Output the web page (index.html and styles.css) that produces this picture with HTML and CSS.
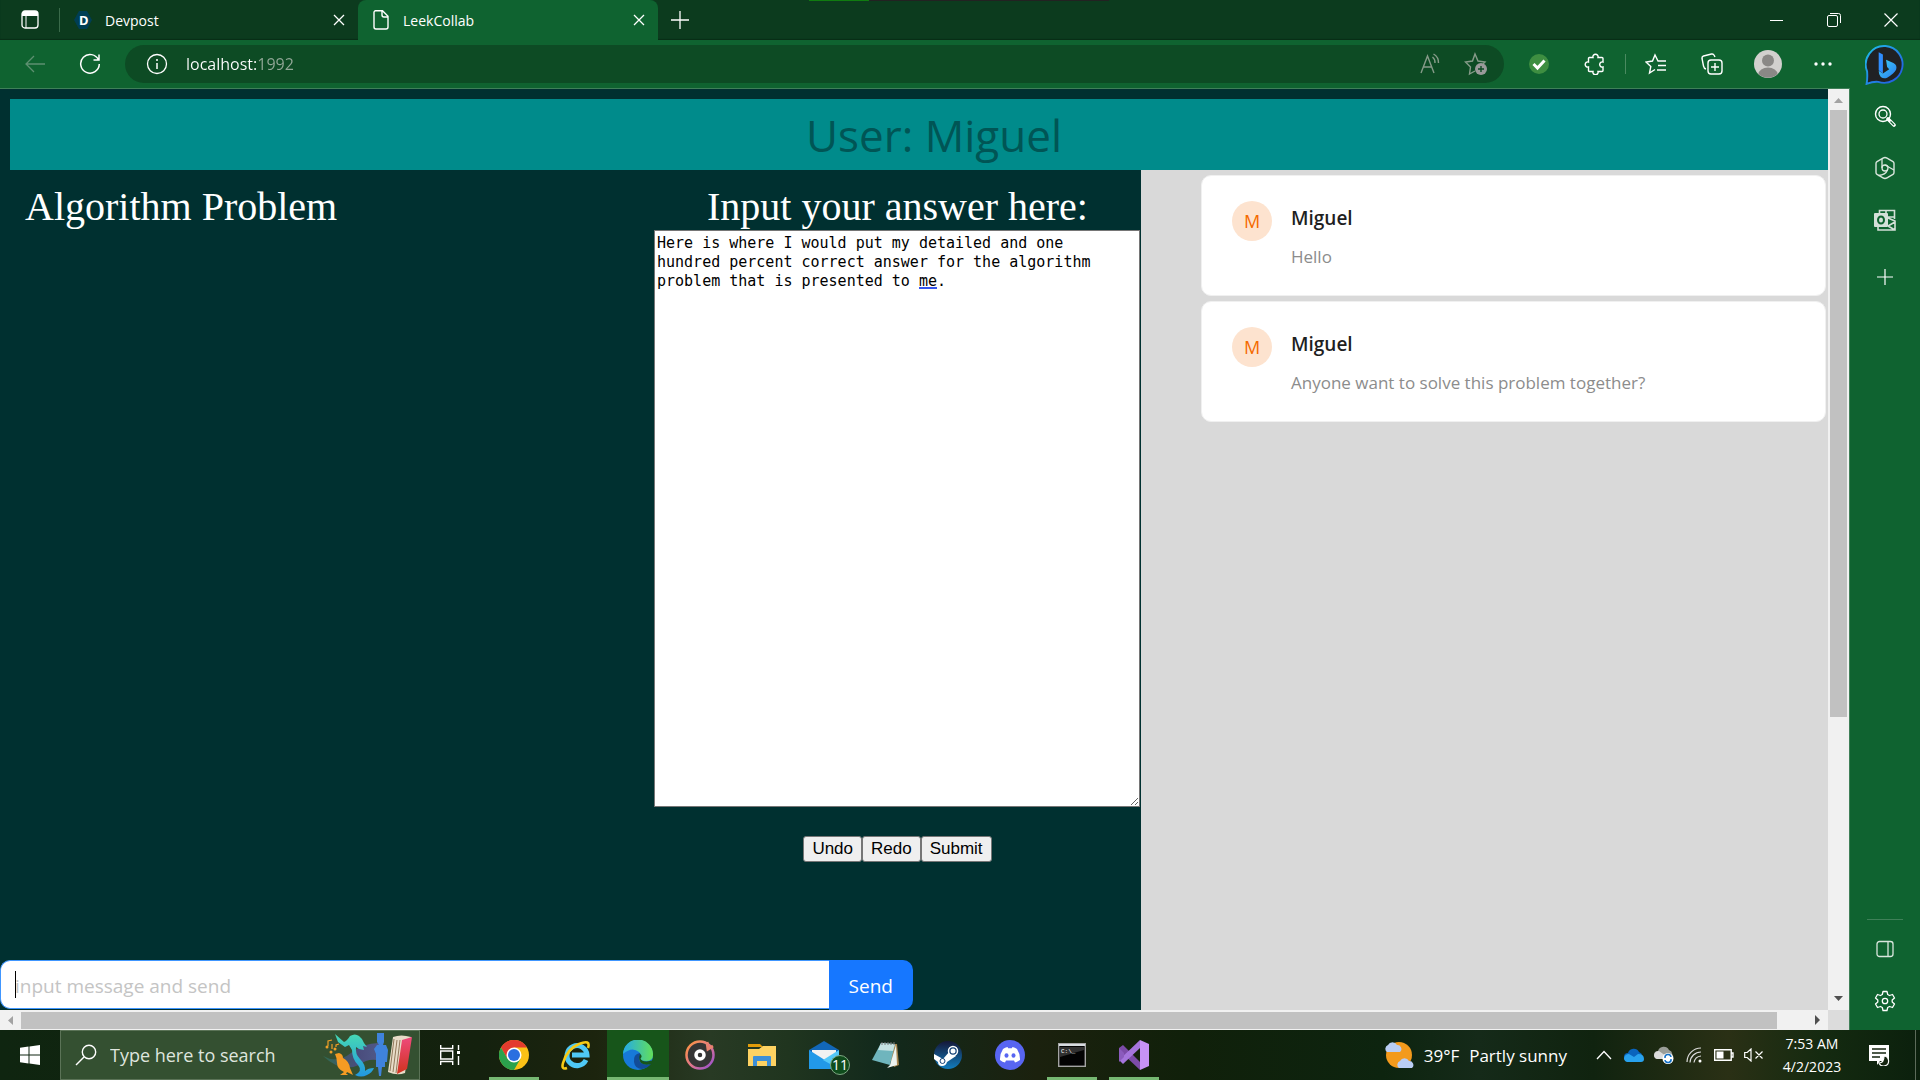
FILE: index.html
```html
<!DOCTYPE html>
<html lang="en">
<head>
    <meta charset="UTF-8">
    <meta name="viewport" content="width=device-width, initial-scale=1.0">
    <title>LeekCollab</title>
    <link rel="stylesheet" href="styles.css">
</head>
<body>

    <!-- Tabs -->
    <header class="tab-strip">
        <button class="tab-actions" aria-label="Tab actions">
            <svg width="18" height="20" viewBox="0 0 18 20"><rect x="1" y="1" width="16" height="17" rx="3" fill="none" stroke="#fff" stroke-width="1.3"/><path d="M1 6V4a3 3 0 0 1 3-3h10a3 3 0 0 1 3 3v2z" fill="#fff"/><path d="M5 6v12" stroke="#fff"/></svg>
        </button>
        <div class="tab">
            <svg class="tab-icon" width="18" height="18" viewBox="0 0 18 18"><path d="M5 0h8l5 9-5 9H5L0 9z" fill="#003e54"/><text x="5" y="14" class="favicon-text">D</text></svg>
            <span class="tab-title">Devpost</span>
            <button class="tab-close" aria-label="Close Devpost"><svg width="12" height="12" viewBox="0 0 12 12"><path d="M1 1l10 10M11 1L1 11" stroke="#fff" stroke-width="1.3"/></svg></button>
        </div>
        <div class="tab active">
            <svg class="tab-icon" width="18" height="20" viewBox="0 0 18 20"><path d="M3.500.8h7l5.500 5.500V17a2 2 0 0 1-2 2H4a2 2 0 0 1-2-2V2.500a1.600 1.600 0 0 1 1.500-1.700zM10 1v4a2 2 0 0 0 2 2h4" fill="none" stroke="#fff" stroke-width="1.4"/></svg>
            <span class="tab-title">LeekCollab</span>
            <button class="tab-close" aria-label="Close LeekCollab"><svg width="12" height="12" viewBox="0 0 12 12"><path d="M1 1l10 10M11 1L1 11" stroke="#fff" stroke-width="1.3"/></svg></button>
        </div>
        <button class="new-tab" aria-label="New tab"><svg width="18" height="18" viewBox="0 0 18 18"><path d="M9 0v18M0 9h18" stroke="#fff" stroke-width="1.3"/></svg></button>
        <div class="window-buttons">
            <button aria-label="Minimize"><svg width="14" height="14" viewBox="0 0 14 14"><path d="M0 7.500h13" stroke="#fff"/></svg></button>
            <button aria-label="Restore"><svg width="14" height="14" viewBox="0 0 14 14"><rect x=".5" y="2.500" width="10" height="11" rx="1.500" fill="none" stroke="#fff"/><path d="M3 .5h8.500a2 2 0 0 1 2 2V10" fill="none" stroke="#fff"/></svg></button>
            <button aria-label="Close"><svg width="14" height="14" viewBox="0 0 14 14"><path d="M.5.500l13 13M13.500.500l-13 13" stroke="#fff" stroke-width="1.200"/></svg></button>
        </div>
        <div class="screen-edge"></div>
    </header>

    <div class="browser">
        <div class="browser-main">

            <!-- Address bar -->
            <div class="toolbar">
                <button class="nav-button" aria-label="Back"><svg width="20" height="18" viewBox="0 0 20 18"><path d="M20 9H1M9 1L1 9l8 8" fill="none" stroke="#5d9070" stroke-width="1.3"/></svg></button>
                <button class="nav-button" aria-label="Refresh"><svg width="22" height="22" viewBox="0 0 22 22"><path d="M19.500 7A9.300 9.300 0 1 0 20.300 11M20 1.500V7h-5.500" fill="none" stroke="#fff" stroke-width="1.500"/></svg></button>
                <div class="address">
                    <button aria-label="Site information"><svg width="22" height="22" viewBox="0 0 22 22"><circle cx="11" cy="11" r="9.500" fill="none" stroke="#fff" stroke-width="1.300"/><path d="M11 10v6" stroke="#fff" stroke-width="1.500"/><circle cx="11" cy="7" r="1" fill="#fff"/></svg></button>
                    <input type="text" value="localhost:1992" aria-label="Address">
                    <button aria-label="Read aloud"><svg width="22" height="22" viewBox="0 0 22 22"><path d="M1 20L7.500 3 14 20M3.500 14h8M12.500 4a7 7 0 0 1 2.500 6M13.500 1a10 10 0 0 1 5 9" fill="none" stroke="#869b89" stroke-width="1.400"/></svg></button>
                    <button class="add-favorite" aria-label="Add to favorites"><svg width="24" height="24" viewBox="0 0 24 24"><path d="M11 19l-5.500 3 1-7L1.500 10l7-1L11 2l3 7 7 1-2 2" fill="none" stroke="#869b89" stroke-width="1.400"/><circle cx="17" cy="17" r="6" fill="#9a9a9a"/><path d="M17 14v6M14 17h6" stroke="#0d4b24" stroke-width="1.400"/></svg></button>
                </div>
                <button class="tool-button" aria-label="Extension"><svg width="20" height="20" viewBox="0 0 20 20"><circle cx="10" cy="10" r="10" fill="#3e8e41"/><path d="M4.500 10l4 4 7-7.500" fill="none" stroke="#fff" stroke-width="3"/></svg></button>
                <button class="tool-button" aria-label="Extensions"><svg width="22" height="22" viewBox="0 0 22 22"><path d="M5 4.500h4a2.600 2.600 0 1 1 5 0h4q1 0 1 1V9a2.600 2.600 0 1 0 0 5v3.500q0 1-1 1h-4a2.600 2.600 0 1 1-5 0H5.500q-1 0-1-1V14a2.600 2.600 0 1 1 0-5V5.500q0-1 1-1" fill="none" stroke="#fff" stroke-width="1.400"/></svg></button>
                <span class="tool-divider"></span>
                <button class="tool-button" aria-label="Favorites"><svg width="22" height="22" viewBox="0 0 22 22"><path d="M10 16.500L4.500 20l1.300-6.500L1 9l6.500-1L10 2l3 6h8M13 12.500h8M12 17h9" fill="none" stroke="#fff" stroke-width="1.400"/></svg></button>
                <button class="tool-button" aria-label="Collections"><svg width="22" height="22" viewBox="0 0 22 22"><rect x="7" y="7" width="14" height="14" rx="3" fill="none" stroke="#fff" stroke-width="1.400"/><path d="M14 10v8M10 14h8M5 16Q3 15.500 2.500 13L1 5.500Q.8 3.500 2.500 3l8-2q2-.3 2.500 1l1 2" fill="none" stroke="#fff" stroke-width="1.400"/></svg></button>
                <button class="tool-button" aria-label="Profile"><svg width="28" height="28" viewBox="0 0 28 28"><circle cx="14" cy="14" r="14" fill="#d2d0ce"/><circle cx="14" cy="10.500" r="6" fill="#8a8886"/><path d="M4.500 24a9.500 6.500 0 0 1 19 0A14 14 0 0 1 4.500 24z" fill="#8a8886"/></svg></button>
                <button class="tool-button more" aria-label="Settings and more"><svg width="18" height="4" viewBox="0 0 18 4"><circle cx="2" cy="2" r="1.700" fill="#fff"/><circle cx="9" cy="2" r="1.700" fill="#fff"/><circle cx="16" cy="2" r="1.700" fill="#fff"/></svg></button>
            </div>

            <div class="viewport">
                <!-- LeekCollab page -->
                <div class="page">
                    <div class="user-banner">
                        <h1>User: Miguel</h1>
                    </div>

                    <div class="workspace">
                        <div class="left-side">
                            <div class="problem-row">
                                <section class="problem">
                                    <h2>Algorithm Problem</h2>
                                </section>
                                <section class="answer">
                                    <h2><label for="answer">Input your answer here:</label></h2>
                                    <div class="answer-box">
                                        <textarea id="answer" spellcheck="false">Here is where I would put my detailed and one
hundred percent correct answer for the algorithm
problem that is presented to me.</textarea>
                                        <span class="grammar-mark"></span>
                                    </div>
                                    <div class="answer-buttons">
                                        <button>Undo</button><button>Redo</button><button>Submit</button>
                                    </div>
                                </section>
                            </div>
                            <form class="composer">
                                <div class="composer-field">
                                    <input type="text" placeholder="input message and send" aria-label="Message">
                                    <span class="caret"></span>
                                </div>
                                <button type="button">Send</button>
                            </form>
                        </div>

                        <div class="chat">
                            <article class="message">
                                <span class="avatar">M</span>
                                <div>
                                    <h3>Miguel</h3>
                                    <p>Hello</p>
                                </div>
                            </article>
                            <article class="message">
                                <span class="avatar">M</span>
                                <div>
                                    <h3>Miguel</h3>
                                    <p>Anyone want to solve this problem together?</p>
                                </div>
                            </article>
                        </div>
                    </div>
                </div>

                <div class="scroll-y">
                    <svg width="21" height="21" viewBox="0 0 21 21"><path d="M6 14h9l-4.500-5z" fill="#a3a3a3"/></svg>
                    <div class="track"><div class="thumb"></div></div>
                    <svg width="21" height="21" viewBox="0 0 21 21"><path d="M6 7h9l-4.500 5z" fill="#505050"/></svg>
                </div>
                <div class="scroll-x">
                    <svg width="21" height="20" viewBox="0 0 21 20"><path d="M13 6v9l-5-4.500z" fill="#a3a3a3"/></svg>
                    <div class="track"><div class="thumb"></div></div>
                    <svg width="21" height="20" viewBox="0 0 21 20"><path d="M8 5v10l5-5z" fill="#505050"/></svg>
                </div>
                <div class="scroll-corner"></div>
            </div>
        </div>

        <!-- Edge sidebar -->
        <aside class="sidebar">
            <button class="bing" aria-label="Bing chat"><svg width="40" height="40" viewBox="-1 1 38 38">
                <defs>
                    <linearGradient id="bingRing" x1="0" y1="0" x2="1" y2="1"><stop offset="0" stop-color="#1fc0e8"/><stop offset="1" stop-color="#2450e0"/></linearGradient>
                    <linearGradient id="bingB" x1="0" y1="0" x2="1" y2="1"><stop offset="0" stop-color="#3ed2f5"/><stop offset="1" stop-color="#2a7df2"/></linearGradient>
                </defs>
                <path d="M18.500 2a17.500 17.500 0 1 1-7 34Q7 35.500 .5 38q1-5 .5-12A17.500 17.500 0 0 1 18.500 2z" fill="#202124" stroke="url(#bingRing)" stroke-width="1.800"/>
                <path d="M12 8l4 2v18l-4-3z" fill="#2f8dff"/><path d="M19 15l7 3q4 2 2.500 6.500Q27 28 20 32q-3 1.500-6-.5-2-2-2-6l4 2.500 6-4-2-2z" fill="url(#bingB)"/></svg></button>
            <button aria-label="Search"><svg width="22" height="22" viewBox="0 0 22 22"><circle cx="9" cy="9" r="7.500" fill="none" stroke="#fff" stroke-width="1.400"/><circle cx="9" cy="9" r="4" fill="none" stroke="#fff" stroke-width="1.300"/><path d="M14 14l6 6" stroke="#fff" stroke-width="3.600" stroke-linecap="round"/><path d="M16.500 16.500l3.500 3.500" stroke="#0f6330" stroke-width="1.200"/></svg></button>
            <button aria-label="Copilot"><svg width="22" height="24" viewBox="0 0 22 24"><path d="M11 1.500q1 0 2 .6l6 3.500q1 .6 1 2v8.800q0 1.400-1 2l-6 3.500q-2 1.200-4 0l-6-3.500q-1-.6-1-2V7.600q0-1.400 1-2l6-3.500q1-.6 2-.6z" fill="none" stroke="#d9e6dd" stroke-width="1.400"/><circle cx="11" cy="12" r="3" fill="none" stroke="#d9e6dd" stroke-width="1.300"/><path d="M8 12V3M11 9l9 5M13.500 14q-2 5-9 5.500" fill="none" stroke="#d9e6dd" stroke-width="1.300"/></svg></button>
            <button aria-label="Outlook"><svg width="22" height="22" viewBox="0 0 22 22"><path d="M5.500 4V1.500h15V10M12 1.500V6M13 8h7M14 9l7 3v9H4v-4M14 17l7-4M14 17l7 4" fill="none" stroke="#d4e0d8" stroke-width="1.600"/><rect x="0" y="4" width="14" height="14" rx="1" fill="#d4e0d8"/><ellipse cx="7" cy="11" rx="3" ry="3.500" fill="none" stroke="#0f6330" stroke-width="2"/></svg></button>
            <button class="add-tool" aria-label="Customize"><svg width="16" height="16" viewBox="0 0 16 16"><path d="M8 0v16M0 8h16" stroke="#fff" stroke-width="1.200"/></svg></button>
            <div class="sidebar-bottom">
                <button aria-label="Toggle sidebar"><svg width="18" height="18" viewBox="0 0 18 18"><rect x="1" y="1.500" width="16" height="15" rx="2.500" fill="none" stroke="#d9e6dd" stroke-width="1.300"/><path d="M12 2v14" stroke="#d9e6dd" stroke-width="1.300"/></svg></button>
                <button aria-label="Settings"><svg width="22" height="22" viewBox="0 0 22 22"><path d="M9 1.500h4l.7 3 1.800 1 3-1 2 3.500-2.300 2v2l2.300 2-2 3.500-3-1-1.800 1-.7 3H9l-.7-3-1.800-1-3 1-2-3.500 2.300-2v-2L1.500 8l2-3.500 3 1 1.800-1z" fill="none" stroke="#fff" stroke-width="1.300" stroke-linejoin="round"/><circle cx="11" cy="11" r="2.700" fill="none" stroke="#fff" stroke-width="1.300"/></svg></button>
            </div>
        </aside>
    </div>

    <!-- Taskbar -->
    <footer class="taskbar">
        <button class="start" aria-label="Start"><svg width="20" height="20" viewBox="0 0 20 20"><path d="M0 2.800L8.500 1.600v7.900H0zM9.500 1.400L20 0v9.500H9.500zM0 10.500h8.500v7.900L0 17.200zM9.500 10.500H20V20L9.500 18.600z" fill="#fff"/></svg></button>
        <div class="task-search">
            <svg width="22" height="22" viewBox="0 0 22 22"><circle cx="14" cy="8" r="6.700" fill="none" stroke="#fff" stroke-width="1.400"/><path d="M9 13l-8 8" stroke="#fff" stroke-width="1.400"/></svg>
            <input type="text" placeholder="Type here to search" aria-label="Type here to search">
            <svg class="search-art" width="90" height="46" viewBox="0 0 90 46">
                <defs>
                    <linearGradient id="swirl"><stop offset="0" stop-color="#2f6b52"/><stop offset=".6" stop-color="#4a4c7c"/><stop offset="1" stop-color="#505a8a"/></linearGradient>
                    <linearGradient id="mermaid" x1="0" y1="0" x2="0" y2="1"><stop offset="0" stop-color="#46d9b4"/><stop offset="1" stop-color="#2298e0"/></linearGradient>
                    <linearGradient id="book" x1="0" y1="0" x2="0" y2="1"><stop offset="0" stop-color="#ef4a7c"/><stop offset="1" stop-color="#d0331e"/></linearGradient>
                </defs>
                <path d="M0 24q14 8 28-3t30-10v18q-12-4-22 4-18 8-36-9z" fill="url(#swirl)"/>
                <path d="M5 14V9l4-1M9 17v-5M13 15v-2l3-1" fill="none" stroke="#f0a028" stroke-width="1.200"/>
                <circle cx="4" cy="15" r="1.500" fill="#f0a028"/><circle cx="8" cy="20" r="1.500" fill="#f0a028"/><circle cx="12" cy="17" r="1.500" fill="#f0a028"/>
                <path d="M12 22l4-1q4 1 4 5 6 3 7 10l3 7-4-2-2-1-1 2h2l-1 1h-7l4-3q-7-3-7-9 0-5-2-9z" fill="#f59b23"/>
                <path d="M12 2l9 8q3-1 6-6 5-3 9 0 3 2 5 7l3 4-4-1 1 4-5-1-3-2q-1 7 4 12 6 6 5 12 3-3 9-3-2 5-7 7-6 3-12 0 8-4 3-10-6-6-6-15l-3-5-4 2-7-5z" fill="url(#mermaid)"/>
                <path d="M54 1h7v9l-1 3h3l2 5-1 12h-2v5h-3l-1 9h-2l-1-9h-2V22l-2-5 3-4h2l-2-3z" fill="#3f83dc"/>
                <path d="M70 5q8-3 18 0l-6 36q-8 3-17-1z" fill="#e8dcc8"/><path d="M71 7l-4 32M74 8l-4 32M77 8l-4 33" stroke="#927a5c"/>
                <path d="M79 8l10-3-5 32-10 5z" fill="url(#book)"/>
            </svg>
        </div>
        <button class="task task-view" aria-label="Task View"><svg width="20" height="20" viewBox="0 0 20 20"><path d="M.7 0v3.500h12V0M.7 20v-3.500h12V20M.7 6h12v8H.7zM18.500 0v5M18.500 11v9" fill="none" stroke="#fff" stroke-width="1.400"/><path d="M17 6h3v3h-3z" fill="#fff"/></svg></button>
        <button class="task open" aria-label="Chrome"><svg width="30" height="30" viewBox="0 0 30 30"><circle cx="15" cy="15" r="15" fill="#fbc116"/><path d="M2 7.500A15 15 0 0 1 28 7.500H15L8.500 19z" fill="#e33b2e"/><path d="M2 7.500l6.500 11.250L15 22l6.500-3.200L15 30A15 15 0 0 1 2 7.500z" fill="#2ba24c"/><circle cx="15" cy="15" r="7.500" fill="#fff"/><circle cx="15" cy="15" r="6" fill="#2a6fe0"/></svg></button>
        <button class="task" aria-label="Internet Explorer"><svg width="30" height="30" viewBox="0 0 30 30"><path d="M25 20a10 10 0 1 1 1-5H11" fill="none" stroke="#4fc9f5" stroke-width="5"/><path d="M6 28q-6 2-4-5Q6 9 18 4q12-5 9 4" fill="none" stroke="#f6c915" stroke-width="2.600"/></svg></button>
        <button class="task open current" aria-label="Edge"><svg width="30" height="30" viewBox="0 0 30 30">
            <defs>
                <linearGradient id="edgeTop"><stop offset="0" stop-color="#24a9e8"/><stop offset="1" stop-color="#62e05a"/></linearGradient>
            </defs>
            <circle cx="15" cy="15" r="15" fill="#1779d8"/><path d="M0 14A15 15 0 0 1 30 15q0 6-7 6-6 0-6-3 2-3-1-6-7-6-16 2z" fill="url(#edgeTop)"/><path d="M17 13q-7 1-6 9 1 7 8 7 6-1 9-5-6 2-10-1-3-3-1-5 1-2 0-5z" fill="#124c98"/><path d="M17 14q3 2 .5 4.500 1 3 6 3l6-1-1.500 3.500q-6 2-10-1-3-3-1-9z" fill="#17551a"/></svg></button>
        <button class="task" aria-label="Music"><svg width="30" height="30" viewBox="0 0 30 30">
            <defs>
                <linearGradient id="groove" x1="0" y1="0" x2="1" y2="1"><stop offset="0" stop-color="#ff963c"/><stop offset=".5" stop-color="#e37888"/><stop offset="1" stop-color="#914cd8"/></linearGradient>
            </defs>
            <circle cx="15" cy="15" r="13.500" fill="#353535" stroke="url(#groove)" stroke-width="2.500"/><circle cx="15" cy="15" r="4" fill="none" stroke="#fff" stroke-width="3.500"/><path d="M22 2l1 7 5-3" fill="none" stroke="#e88270" stroke-width="3"/></svg></button>
        <button class="task" aria-label="File Explorer"><svg width="28" height="24" viewBox="0 0 28 24"><path d="M0 1h12l3 3H0z" fill="#e29c0a"/><path d="M0 6h11l4-3h13v20H0z" fill="#fdd262"/><path d="M5 23V14q0-1 1-1h16q1 0 1 1v9h-4v-5H9v5z" fill="#3d8fd6"/></svg></button>
        <button class="task" aria-label="Mail, 11 unread"><svg width="30" height="28" viewBox="0 0 30 28"><path d="M0 9L15 0l15 9v19H0z" fill="#1267b8"/><path d="M3 9h24v8l-12 5-12-5z" fill="#f2f2f2"/><path d="M0 9l30 19H0z" fill="#2299e8"/><path d="M30 9L14 19l16 9z" fill="#54c8f8"/></svg><span class="badge">11</span></button>
        <button class="task" aria-label="Notepad"><svg width="28" height="28" viewBox="0 0 28 28"><path d="M10 3h15l2 21-5 2z" fill="#a98750"/><path d="M9 2l14 1-5 21L0 19z" fill="#6fb5bd"/><path d="M9 2l14 1-2 7-15-1z" fill="#c5e2e2"/><path d="M24 4l1 20-10 3 3-3z" fill="#edf3f0"/><path d="M10 1v3M13 1v3M16 1v3M19 1v3M22 1v3" stroke="#767676"/></svg></button>
        <button class="task" aria-label="Steam"><svg width="28" height="28" viewBox="0 0 28 28">
            <defs>
                <linearGradient id="steam" x1="0" y1="0" x2="0" y2="1"><stop offset="0" stop-color="#151738"/><stop offset="1" stop-color="#127dbe"/></linearGradient>
            </defs>
            <circle cx="14" cy="14" r="14" fill="url(#steam)"/><path d="M0 13l9 5 7-8 6 5-9 6q-1 4-5 4t-4-4L0 18z" fill="#fff"/><circle cx="19" cy="10" r="4.500" fill="#174377" stroke="#fff" stroke-width="1.500"/><circle cx="19" cy="10" r="2.500" fill="#fff"/><circle cx="8.500" cy="20" r="2.500" fill="none" stroke="#174377"/></svg></button>
        <button class="task" aria-label="Discord"><svg width="30" height="30" viewBox="0 0 30 30"><circle cx="15" cy="15" r="15" fill="#5865f2"/><path d="M8 9q2-1.500 4.500-2l.7 1.200h3.600l.7-1.200Q20 7.500 22 9q3.300 5 3 11-2.500 2-5 2.500l-1-2h-8l-1 2Q7.500 22 5 20q-.3-6 3-11z" fill="#fff"/><ellipse cx="11.500" cy="15.500" rx="2" ry="2.300" fill="#5865f2"/><ellipse cx="18.500" cy="15.500" rx="2" ry="2.300" fill="#5865f2"/></svg></button>
        <button class="task open" aria-label="Command Prompt"><svg width="28" height="24" viewBox="0 0 28 24"><rect x=".7" y=".7" width="26.600" height="22.600" fill="#030303" stroke="#a4a4a4" stroke-width="1.400"/><path d="M1 1h26v2H1z" fill="#d7dce0"/><path d="M2 4h24v3L2 14z" fill="#303030"/><text x="3" y="10" class="cmd-text">C:\_</text></svg></button>
        <button class="task open" aria-label="Visual Studio"><svg width="30" height="30" viewBox="0 0 30 30"><path d="M0 8l4-3 17 17v8L4 14v8l-4-2z" fill="#7c4ba8"/><path d="M0 20l4 4L21 8V0L0 20z" fill="#a575dc"/><path d="M21 0l9 4v22l-9 4z" fill="#c792f5"/><path d="M0 8l5 5v4l-5 5z" fill="#8b5bbd"/></svg></button>

        <div class="tray">
            <button class="weather">
                <svg width="30" height="30" viewBox="0 0 30 30"><circle cx="15" cy="15" r="13" fill="#f39a1c"/><path d="M3 12a4 4 0 0 1 1-7 5 5 0 0 1 9 0 4 4 0 0 1 3 7zM15 28a4 4 0 0 1 1-7 5 5 0 0 1 9 0 4 4 0 0 1 3 7z" fill="#b9cdf4"/></svg>
                <span>39°F</span>
                <span>Partly sunny</span>
            </button>
            <button class="tray-icon" aria-label="Show hidden icons"><svg width="16" height="10" viewBox="0 0 16 10"><path d="M1 9l7-7.500L15 9" fill="none" stroke="#fff" stroke-width="1.300"/></svg></button>
            <button class="tray-icon" aria-label="OneDrive"><svg width="20" height="14" viewBox="0 0 20 14"><path d="M4 13a4 4 0 0 1 0-8 6 6 0 0 1 11-1 5 5 0 0 1 1 9z" fill="#0a64bd"/><path d="M3 14q-3-1-3-4 1-4 5-4l5 3 4-3q6 0 6 5 0 3-3 3z" fill="#28a2ee"/></svg></button>
            <button class="tray-icon" aria-label="Cloud sync"><svg width="20" height="18" viewBox="0 0 20 18"><path d="M4 13a4 4 0 0 1 0-8 6 6 0 0 1 11-1 5 5 0 0 1 1 9z" fill="#9a9d98"/><path d="M3 13q-3-1-3-4 1-4 5-4l7 5v3z" fill="#dcdcdc"/><circle cx="14" cy="12.500" r="5.500" fill="#fff"/><path d="M11 12a3 3 0 0 1 6-1M17 13a3 3 0 0 1-6 1" fill="none" stroke="#1270c8" stroke-width="1.500"/></svg></button>
            <button class="tray-icon" aria-label="Network"><svg width="16" height="16" viewBox="0 0 16 16"><path d="M1 15A14 14 0 0 1 15 1M4 15.500A11 11 0 0 1 15 5M8 15.500A8 8 0 0 1 15 9" fill="none" stroke="#ddd" stroke-width="1.200"/><circle cx="14" cy="14" r="1.500" fill="#fff"/></svg></button>
            <button class="tray-icon" aria-label="Battery"><svg width="20" height="12" viewBox="0 0 20 12"><path d="M.7.700h16.500v10.600H.7zM17.500 4H19v4h-1.500" fill="none" stroke="#fff" stroke-width="1.400"/><path d="M2.500 2.500h7v7h-7z" fill="#fff"/></svg></button>
            <button class="tray-icon" aria-label="Volume muted"><svg width="20" height="14" viewBox="0 0 20 14"><path d="M.7 4.500h2.500L7 1v12L3.200 9.500H.7zM11.500 3.500l7 7M18.500 3.500l-7 7" fill="none" stroke="#fff" stroke-width="1.200"/></svg></button>
            <button class="clock"><span>7:53 AM</span><span>4/2/2023</span></button>
            <button class="notifications" aria-label="Notifications"><svg width="22" height="22" viewBox="0 0 22 22"><path d="M1 1h20v16h-9l-3 4v-4H1z" fill="#fff"/><path d="M4 5h14M4 9h14M4 13h8" stroke="#14240f" stroke-width="1.300"/><path d="M16 12a5 5 0 1 1-5 7q5 0 5-7z" fill="#14240f" stroke="#fff" stroke-width="1.200"/></svg></button>
        </div>
    </footer>

</body>
</html>
```

FILE: styles.css
```css
* {
    box-sizing: border-box;
}
body {
    margin: 0;
    height: 100vh;
    display: flex;
    flex-direction: column;
    overflow: hidden;
    background-color: #0f6330;
    color: white;
    font-family: "Open Sans", "Noto Sans", sans-serif;
}
svg {
    display: block;
    flex: none;
}
button {
    display: flex;
    align-items: center;
    justify-content: center;
    padding: 0;
    border: 0;
    background: none;
    color: inherit;
    font-family: inherit;
}
h1, h2, h3, p {
    margin: 0;
}

/* tabs */
.tab-strip {
    position: relative;
    display: flex;
    height: 40px;
    background-color: #0c3b1e;
    box-shadow: inset 0 -1px 1px #082e16;
}
.tab-actions {
    width: 60px;
    border-right: 1px solid #3a6a4a;
    margin: 8px 0;
}
.tab {
    display: flex;
    align-items: center;
    width: 298px;
    padding: 0 11px 0 14px;
    font-size: 14px;
}
.tab.active {
    width: 300px;
    background-color: #0f6330;
    border-radius: 8px 8px 0 0;
}
.tab-icon {
    margin-right: 13px;
}
.tab-title {
    flex: 1;
}
.tab-close {
    width: 16px;
    height: 16px;
}
.favicon-text {
    font: bold 13px "Noto Sans", sans-serif;
    fill: white;
}
.new-tab {
    width: 43px;
}
.window-buttons {
    display: flex;
    margin-left: auto;
    margin-right: 1px;
}
.window-buttons button {
    width: 57px;
}
.screen-edge {
    position: absolute;
    top: 0;
    left: 809px;
    width: 300px;
    height: 1px;
    background: linear-gradient(to right, #107c10 20%, #222222 20%);
}

/* browser frame */
.browser {
    flex: 1;
    display: flex;
    min-height: 0;
}
.browser-main {
    flex: 1;
    display: flex;
    flex-direction: column;
    min-width: 0;
}
.toolbar {
    display: flex;
    align-items: center;
    height: 49px;
    padding-left: 10px;
    border-bottom: 1px solid #3f8058;
}
.nav-button {
    width: 50px;
    height: 38px;
    margin-right: 5px;
}
.address {
    flex: 1;
    display: flex;
    align-items: center;
    height: 38px;
    margin-right: 7px;
    margin-left: 5px;
    padding: 0 16px 0 21px;
    border-radius: 19px;
    background-color: #0d4b24;
}
.address input {
    flex: 1;
    min-width: 0;
    margin-left: 18px;
    padding: 0;
    border: 0;
    color: transparent;
    background: linear-gradient(to right, #ffffff 70px, #93a898 70px);
    -webkit-background-clip: text;
    background-clip: text;
    font-family: inherit;
    font-size: 16px;
}
.add-favorite {
    margin-left: 22px;
}
.tool-button {
    width: 56px;
    height: 38px;
}
.tool-button.more {
    width: 54px;
}
.tool-divider {
    width: 1px;
    height: 20px;
    margin: 0 2px;
    background-color: #4a8a60;
}
.viewport {
    flex: 1;
    min-height: 0;
    display: grid;
    grid-template-columns: 1fr 21px;
    grid-template-rows: 1fr 20px;
    border-right: 1px solid #3f8058;
}

/* LeekCollab */
.page {
    display: flex;
    flex-direction: column;
    min-width: 0;
    min-height: 0;
    padding-top: 10px;
    overflow: hidden;
    background-color: #003030;
}
.user-banner {
    height: 71px;
    margin-left: 10px;
    padding-top: 2px;
    padding-left: 30px;
    background-color: #008b8b;
    text-align: center;
}
.user-banner h1 {
    font-size: 44px;
    font-weight: 400;
    line-height: 69px;
    color: #005555;
}
.workspace {
    flex: 1;
    display: grid;
    grid-template-columns: 1141fr 687fr;
    min-height: 0;
}
.left-side {
    display: flex;
    flex-direction: column;
}
.problem-row {
    flex: 1;
    display: grid;
    grid-template-columns: 654fr 487fr;
    padding-top: 14px;
}
.problem-row h2 {
    font-family: "Liberation Serif", serif;
    font-size: 40px;
    font-weight: 400;
    line-height: 46px;
}
.problem {
    padding-left: 25px;
}
.answer {
    text-align: center;
}
.answer-box {
    position: relative;
    margin-right: 1px;
    font: 15px/19px "DejaVu Sans Mono", monospace;
}
.answer-box textarea {
    display: block;
    width: 100%;
    height: 577px;
    padding: 3px 2px;
    border: 1px solid #767676;
    background-color: white;
    color: black;
    font: inherit;
}
.grammar-mark {
    position: absolute;
    top: 57px;
    left: calc(3px + 29ch);
    width: 2ch;
    height: 2px;
    background-color: #3355ee;
}
.answer-buttons {
    display: flex;
    justify-content: center;
    margin-top: 29px;
}
.answer-buttons button {
    height: 26px;
    padding: 0 8px;
    border: 1px solid #767676;
    border-radius: 3px;
    background-color: #efefef;
    color: black;
    font-family: "Liberation Sans", Arial, sans-serif;
    font-size: 17px;
}
.composer {
    display: flex;
    width: 80%;
    height: 50px;
}
.composer-field {
    position: relative;
    flex: 1;
}
.composer input {
    width: 100%;
    height: 49px;
    padding: 2px 14px 0;
    border: 1px solid #4096ff;
    border-right: 0;
    border-radius: 10px 0 0 10px;
    font-family: inherit;
    font-size: 19px;
}
.composer input::placeholder {
    color: #c4c4c4;
}
.caret {
    position: absolute;
    top: 11px;
    left: 15px;
    width: 1px;
    height: 27px;
    background-color: black;
}
.composer button {
    width: 84px;
    padding-top: 2px;
    border-radius: 0 10px 10px 0;
    background-color: #1677ff;
    font-size: 19px;
}
.chat {
    display: flex;
    flex-direction: column;
    gap: 5px;
    padding: 5px 2px 0 60px;
    background-color: #d9d9d9;
}
.message {
    display: flex;
    gap: 19px;
    height: 121px;
    padding: 25px 30px;
    border: 1px solid #f0f0f0;
    border-radius: 10px;
    background-color: white;
}
.avatar {
    width: 40px;
    height: 40px;
    border-radius: 50%;
    background-color: #fde3cf;
    color: #f56a00;
    font-size: 18px;
    line-height: 40px;
    text-align: center;
}
.message h3 {
    margin-bottom: 8px;
    font-size: 19px;
    font-weight: 600;
    line-height: 34px;
    color: #1f1f1f;
}
.message p {
    font-size: 17px;
    line-height: 28px;
    color: #8c8c8c;
}

/* scrollbars */
.scroll-y, .scroll-x {
    display: flex;
    background-color: #f1f1f1;
}
.scroll-y {
    flex-direction: column;
}
.track {
    flex: 1;
}
.thumb {
    background-color: #c1c1c1;
}
.scroll-y .thumb {
    height: 69%;
    margin: 0 2px;
}
.scroll-x .track {
    padding: 2px 0 1px;
}
.scroll-x .thumb {
    height: 100%;
    margin-right: 30px;
}
.scroll-corner {
    background-color: #dcdcdc;
}

/* sidebar */
.sidebar {
    display: flex;
    flex-direction: column;
    align-items: center;
    width: 70px;
}
.sidebar button {
    width: 52px;
    height: 52px;
}
.sidebar .bing {
    height: 50px;
}
.sidebar .add-tool {
    height: 62px;
}
.sidebar-bottom {
    width: 36px;
    margin-top: auto;
    padding: 3px 0;
    border-top: 1px solid #3f8058;
    display: flex;
    flex-direction: column;
    align-items: center;
}

/* taskbar */
.taskbar {
    display: flex;
    height: 50px;
    background: linear-gradient(to right, #0f2510, #14210e 25%, #1c240e 31%, #283a24 37%, #20351f 41%, #12291c 46%, #1b210e 54%, #10200a 62%, #0d240f 72%, #152a19 77%, #10230f 83%, #2a3015 90%, #142a10 95%, #0b200d);
}
.start {
    width: 60px;
}
.task-search {
    display: flex;
    align-items: center;
    width: 360px;
    padding-left: 14px;
    border: 1px solid #5b7357;
    background-color: #345031;
}
.task-search input {
    flex: 1;
    min-width: 0;
    margin-left: 13px;
    padding: 0;
    border: 0;
    background: none;
    font-family: inherit;
    font-size: 18px;
}
.task-search input::placeholder {
    color: #dfe5de;
}
.search-art {
    margin-right: 6px;
}
.task {
    position: relative;
    width: 62px;
}
.task.task-view {
    width: 63px;
    padding-right: 3px;
}
.task.open::after {
    content: "";
    position: absolute;
    bottom: 0;
    left: 6px;
    right: 6px;
    height: 3px;
    background-color: #76b872;
}
.task.current {
    background-color: #17551a;
}
.task.current::after {
    left: 0;
    right: 0;
}
.badge {
    position: absolute;
    right: 5px;
    bottom: 5px;
    width: 20px;
    height: 20px;
    border: 1px solid #7ea883;
    border-radius: 50%;
    background-color: #0f4c1c;
    font-size: 14px;
    line-height: 18px;
}
.cmd-text {
    font: 6px "Liberation Mono", monospace;
    fill: white;
}
.tray {
    display: flex;
    margin-left: auto;
    margin-right: 4px;
    border-right: 1px solid #5c6b5a;
}
.weather {
    gap: 10px;
    margin-right: 22px;
    font-size: 17px;
}
.tray-icon {
    width: 30px;
}
.clock {
    flex-direction: column;
    width: 86px;
    font-size: 14px;
    line-height: 23px;
}
.notifications {
    width: 60px;
    padding-right: 12px;
}
```
